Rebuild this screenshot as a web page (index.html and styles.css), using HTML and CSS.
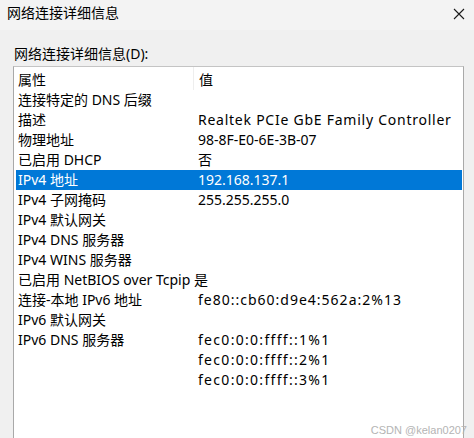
FILE: index.html
```html
<!DOCTYPE html>
<html lang="zh-CN">
<head>
<meta charset="utf-8">
<link rel="stylesheet" href="styles.css">
</head>
<body>
<div class="titlebar">
  <span class="title">网络连接详细信息</span>
  <svg class="close" width="12" height="12" viewBox="0 0 12 12"><path d="M1 1L11 11M11 1L1 11" stroke="#1a1a1a" stroke-width="1.1"/></svg>
</div>
<div class="content">
  <div class="label">网络连接详细信息(D):</div>
  <div class="listbox">
    <div class="header"><span class="c1">属性</span><span class="c2">值</span></div>
    <div class="row"><span class="c1">连接特定的 DNS 后缀</span><span class="c2"></span></div>
    <div class="row"><span class="c1">描述</span><span class="c2 wider">Realtek PCIe GbE Family Controller</span></div>
    <div class="row"><span class="c1">物理地址</span><span class="c2">98-8F-E0-6E-3B-07</span></div>
    <div class="row"><span class="c1">已启用 DHCP</span><span class="c2">否</span></div>
    <div class="row sel"><span class="c1">IPv4 地址</span><span class="c2">192.168.137.1</span></div>
    <div class="row"><span class="c1">IPv4 子网掩码</span><span class="c2">255.255.255.0</span></div>
    <div class="row"><span class="c1">IPv4 默认网关</span><span class="c2"></span></div>
    <div class="row"><span class="c1">IPv4 DNS 服务器</span><span class="c2"></span></div>
    <div class="row"><span class="c1">IPv4 WINS 服务器</span><span class="c2"></span></div>
    <div class="row"><span class="c1 wide">已启用 NetBIOS over Tcpip 是</span></div>
    <div class="row"><span class="c1">连接-本地 IPv6 地址</span><span class="c2 widest">fe80::cb60:d9e4:562a:2%13</span></div>
    <div class="row"><span class="c1">IPv6 默认网关</span><span class="c2"></span></div>
    <div class="row"><span class="c1">IPv6 DNS 服务器</span><span class="c2 wide2">fec0:0:0:ffff::1%1</span></div>
    <div class="row"><span class="c1"></span><span class="c2 wide2">fec0:0:0:ffff::2%1</span></div>
    <div class="row"><span class="c1"></span><span class="c2 wide2">fec0:0:0:ffff::3%1</span></div>
  </div>
</div>
<div class="watermark">CSDN @kelan0207</div>
</body>
</html>
```
FILE: styles.css
```css
html, body {
  margin: 0;
  padding: 0;
  background: #f0f0f0;
  font-family: "Noto Sans", "Noto Sans CJK SC", sans-serif;
  font-size: 14px;
  color: #000;
  overflow: hidden;
  height: 438px;
}
.titlebar {
  height: 30px;
  background: #f3f3f3;
  display: flex;
  align-items: center;
  justify-content: space-between;
  padding: 0 9px 4px 7px;
  box-sizing: border-box;
}
.title {
  font-size: 14px;
  line-height: 20px;
}
.close {
  display: block;
  margin-top: 2px;
}
.content {
  padding: 14px 10px 0 13px;
}
.label {
  line-height: 20px;
  padding-left: 1px;
  margin-bottom: 2px;
}
.listbox {
  background: #fff;
  border: 1px solid #a9a9a9;
  border-top-color: #c4c4c4;
  border-bottom: none;
  height: 372px;
  box-sizing: border-box;
  overflow: hidden;
  padding: 0 1px 0 2px;
}
.header {
  display: flex;
  height: 23px;
  line-height: 26px;
}
.header .c1 {
  border-right: 1px solid #eeeeee;
}
.row {
  display: flex;
  height: 20px;
  line-height: 20px;
}
.c1 {
  width: 175px;
  flex: none;
  padding-left: 2px;
  white-space: nowrap;
}
.c2 {
  padding-left: 5px;
  white-space: nowrap;
}
.c2.wider {
  letter-spacing: 0.75px;
}
.c2.widest {
  letter-spacing: 1px;
}
.c2.wide2 {
  letter-spacing: 1.3px;
}
.c1.wide {
  width: auto;
}
.sel {
  background: #0078d7;
  color: #fff;
}
.watermark {
  position: absolute;
  right: 7px;
  bottom: 2px;
  font-size: 11px;
  color: #b4b4b4;
  font-family: "Liberation Sans", sans-serif;
}
```
